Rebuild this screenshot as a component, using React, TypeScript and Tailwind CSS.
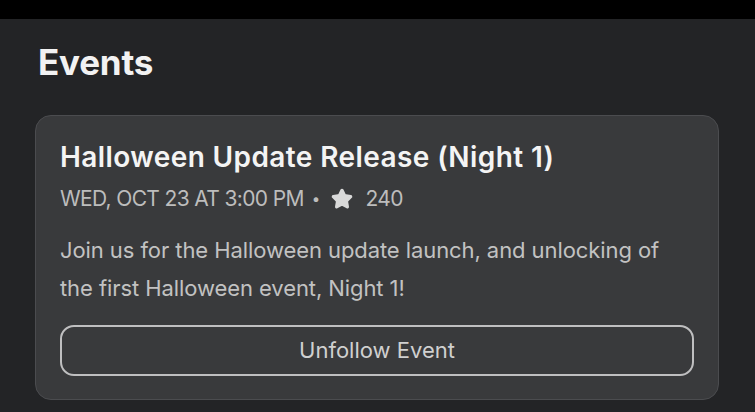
import { Star } from "lucide-react";

export default function App() {
  return (
    <main
      className="flex h-[412px] w-[755px] flex-col overflow-hidden bg-[#232426]"
      style={{ fontFamily: "Inter, 'Noto Sans', sans-serif" }}
    >
      <div className="h-[19px] shrink-0 bg-black" />
      <div className="flex flex-col pl-[35px] pr-[36px]">
        <h1 className="mt-[22px] pl-[3px] text-[35px] font-bold leading-[42px] tracking-[-0.2px] text-[#f2f2f2]">
          Events
        </h1>
        <section className="mt-[32px] rounded-[16px] border border-[#4b4c4f] bg-[#393a3c] px-[24px] pb-[23px] pt-[24px]">
          <h2 className="text-[28px] font-semibold leading-[34px] tracking-[0.4px] text-[#f4f4f4]">
            Halloween Update Release (Night 1)
          </h2>
          <div className="mt-[12px] flex items-center text-[21px] leading-[26px] tracking-[-0.65px] text-[#bdbdbd]">
            <span>WED, OCT 23 AT 3:00 PM</span>
            <span className="ml-[8px] text-[15px]">•</span>
            <Star className="ml-[11px] h-[22px] w-[22px] fill-[#d9d9d9] text-[#d9d9d9]" strokeWidth={2.5} strokeLinejoin="round" />
            <span className="ml-[13px]">240</span>
          </div>
          <p className="mt-[19px] text-[22px] leading-[38px] tracking-[-0.08px] text-[#c2c2c2]">
            Join us for the Halloween update launch, and unlocking of
            <br />
            the first Halloween event, Night 1!
          </p>
          <button
            type="button"
            className="mt-[18px] flex h-[51px] w-full items-center justify-center rounded-[14px] border-2 border-[#bfbfc0] text-[22px] tracking-[0px] text-[#d0d0d0]"
          >
            Unfollow Event
          </button>
        </section>
      </div>
    </main>
  );
}
